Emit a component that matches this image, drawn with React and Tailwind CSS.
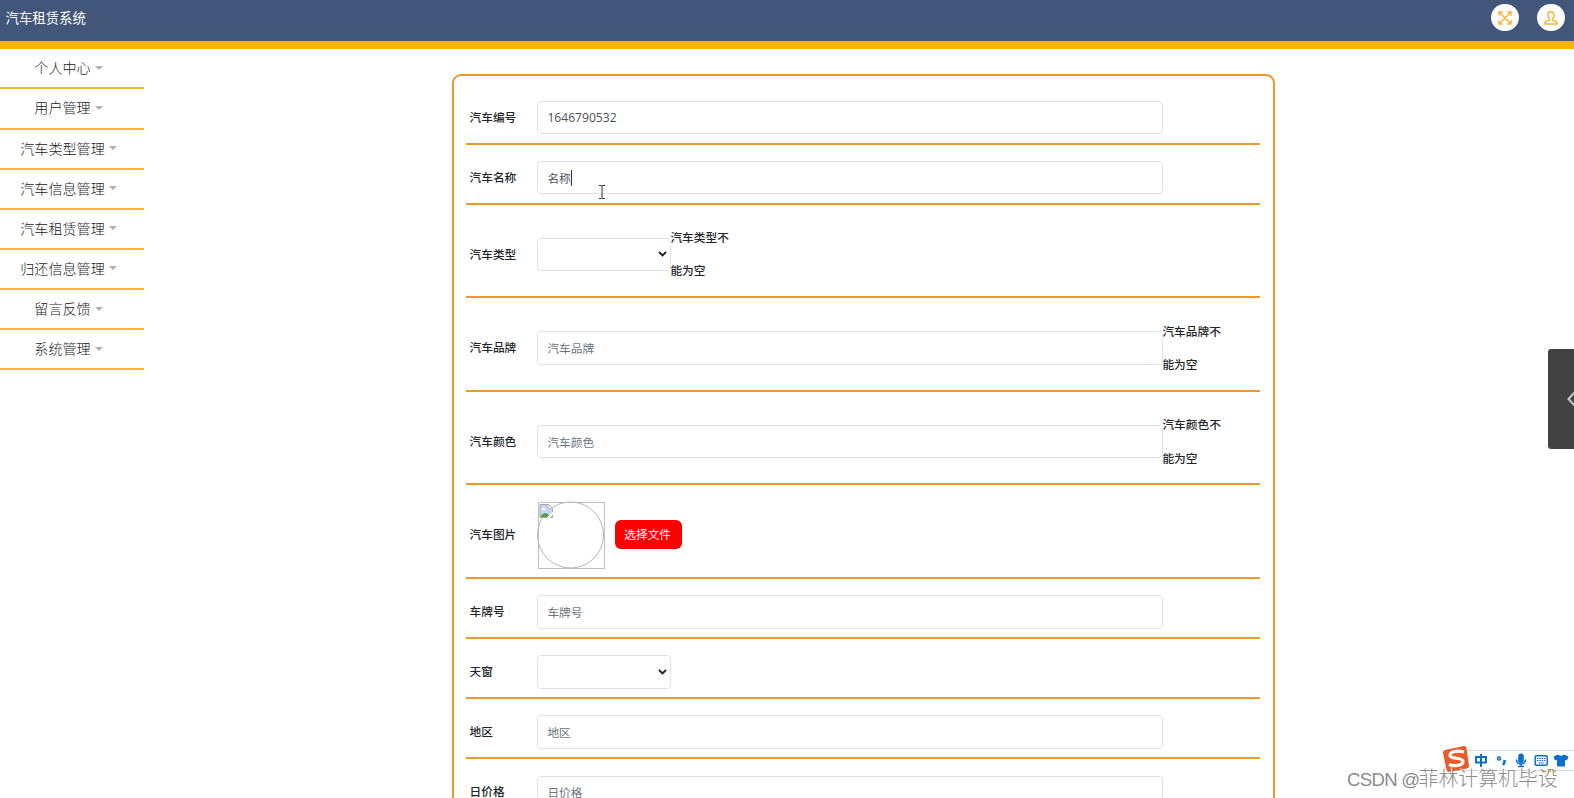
import { useState } from "react";

const menus = [
  "个人中心",
  "用户管理",
  "汽车类型管理",
  "汽车信息管理",
  "汽车租赁管理",
  "归还信息管理",
  "留言反馈",
  "系统管理",
];

const fields = [
  { name: "bianhao", label: "汽车编号", type: "text" },
  { name: "mingcheng", label: "汽车名称", type: "text", focused: true },
  { name: "leixing", label: "汽车类型", type: "select", error: true },
  { name: "pinpai", label: "汽车品牌", type: "text", error: true },
  { name: "yanse", label: "汽车颜色", type: "text", error: true },
  { name: "tupian", label: "汽车图片", type: "file" },
  { name: "chepaihao", label: "车牌号", type: "text" },
  { name: "tianchuang", label: "天窗", type: "select" },
  { name: "diqu", label: "地区", type: "text" },
  { name: "rijiage", label: "日价格", type: "text" },
];

function Header() {
  return (
    <header className="flex h-[49px] items-start justify-between border-b-8 border-[#ffb400] bg-[#415678] pl-[5.5px] pr-[9.5px]">
      <h1 className="pt-[8px] text-[13.4px] leading-[21px] text-white">汽车租赁系统</h1>
      <div className="flex gap-[18px] pt-[4px]">
        <button className="flex h-[27px] w-[28px] items-center justify-center rounded-full bg-white">
          <svg width="14" height="14" viewBox="0 0 14 14" fill="none" stroke="#fcb52e" strokeWidth="1.5">
            <path d="M1.5 1.5l11 11M12.5 1.5l-11 11M1 4.8V1h3.8M9.2 1H13v3.8M13 9.2V13H9.2M4.8 13H1V9.2" />
          </svg>
        </button>
        <button className="flex h-[27px] w-[28px] items-center justify-center rounded-full bg-white">
          <svg width="14" height="14" viewBox="0 0 14 14" fill="none" stroke="#fcb52e" strokeWidth="1.5" strokeLinejoin="round">
            <path d="M7 .8C4.9.8 4 2.2 4 4c0 1.9.6 2.9 1.5 3.8v1.4L1.8 10.6C1.2 11 .9 11.8.8 13h12.4c-.1-1.2-.4-2-1-2.4L8.5 9.2V7.8C9.4 6.9 10 5.9 10 4 10 2.2 9.1.8 7 .8z" />
          </svg>
        </button>
      </div>
    </header>
  );
}

function Sidebar() {
  return (
    <nav className="w-[144px] shrink-0 pt-[0.4px]">
      {menus.map((item) => (
        <a key={item} className="flex h-[40.1px] items-center justify-center border-b-2 border-[#f9b82f] pb-[1px] pr-[7px] text-[14.1px] font-light text-[#222]">
          {item}
          <span className="ml-[4px] h-0 w-0 border-x-4 border-t-4 border-x-transparent border-t-[#b0b0b0]"></span>
        </a>
      ))}
    </nav>
  );
}

function BrokenImage() {
  return (
    <svg width="68" height="68" viewBox="0 0 68 68" fill="none">
      <rect x="1.5" y="1.5" width="66" height="66" stroke="#c0c0c0" />
      <circle cx="33.5" cy="34" r="33" stroke="#b5b5b5" />
      <path d="M3 3.5h8l4.5 4v9H3z" fill="#c6d6f5" stroke="#a5a5a5" />
      <path d="M11 3.5v4h4.5z" fill="#fff" stroke="#a5a5a5" strokeWidth=".7" />
      <path d="M5 8.5c0-1.500 2-2 2.500-.8C9 7.500 9.500 8.500 9 9H5z" fill="#fff" />
      <path d="M3.5 16c1-3 3-4 5-4s3 1 3.500 4z" fill="#55a545" />
      <path d="M9 17.5l7-7v3l-4 4z" fill="#fff" />
    </svg>
  );
}

function Field({ field, value, onChange }) {
  const { name, label, type, error, focused } = field;

  return (
    <div className={`flex items-center border-b-2 border-[#eb982f] pl-[3.5px] pt-[16.5px] pb-[8.5px] ${error || type === "file" ? "h-[93.55px]" : "h-[60.1px]"}`}>
      <label className="w-[67.5px] shrink-0 font-medium text-[#212529]">{label}</label>

      {type === "text" && (
        <div className="relative h-[33.4px] w-[626px] shrink-0">
          <input name={name} value={value} onChange={onChange} placeholder={label} className={`h-full w-full rounded-[4px] border border-[#e0e2e6] bg-white px-[9.4px] text-[#495057] outline-none placeholder:text-[#6c757d] ${name === "bianhao" ? "font-['Open_Sans','Noto_Sans',sans-serif] text-[12.1px]" : ""}`} />
          {focused && <span className="absolute left-[34px] top-[9px] h-[16px] w-px bg-[#333]"></span>}
        </div>
      )}

      {type === "select" && (
        <div className="flex h-[33.4px] w-[134px] shrink-0 items-center justify-end rounded-[4px] border border-[#e0e2e6] pr-[3px]">
          <svg width="9" height="6" viewBox="0 0 9 6" fill="none" stroke="#222" strokeWidth="1.8">
            <path d="M1 1l3.5 3.5L8 1" />
          </svg>
        </div>
      )}

      {type === "file" && (
        <>
          <BrokenImage />
          <button className="mb-[1px] ml-[10.2px] h-[28.5px] w-[67px] rounded-[6px] bg-[#ff0000] pr-[2px] text-white">选择文件</button>
        </>
      )}

      {error && <span className="-ml-[0.6px] w-[66px] shrink-0 font-medium leading-[33.4px] text-[#212529]">{`${label}不能为空`}</span>}
    </div>
  );
}

function InputMethodBar() {
  return (
    <div className="absolute left-[1442px] top-[745px] flex h-[28px] w-[132px] items-center">
      <div className="absolute left-[14px] right-0 top-[5px] h-[21px] border-y border-[#c8dbe8] bg-white"></div>
      <svg className="relative" width="132" height="28" viewBox="0 0 132 28" fill="none">
        <path d="M3 5l19-4q2 0 2.500 2L27 21q0 2-2 2.500L7 27q-2 0-2.500-2L1 8q-.3-2 2-3z" fill="#ed5a29" />
        <path d="M22 7c-6-2-14-.5-14 3.500 0 4 13 1.500 13 6 0 4.500-9 5-14 3" stroke="#fff" strokeWidth="3.2" />
        <g stroke="#0b6fd0" strokeWidth="2">
          <path d="M34 12h10v5.500H34zM39 9v13" />
          <circle cx="57" cy="13.5" r="1.5" strokeWidth="1.5" />
          <path d="M62.500 15v2.500l-1.500 2.500" strokeWidth="2.5" />
          <path d="M74.500 14.500c0 6 9 6 9 0M79 18.500v3.500M76 21.500h6" strokeWidth="1.6" />
        </g>
        <rect x="76.2" y="8.5" width="5.6" height="9.5" rx="2.8" fill="#0b6fd0" />
        <rect x="93.2" y="10.7" width="12" height="9.5" rx="1" stroke="#0b6fd0" strokeWidth="1.5" />
        <path d="M95 13.500h9M95 15.500h9M97 17.800h5" stroke="#0b6fd0" strokeWidth="1.2" strokeDasharray="1.5 .8" />
        <path d="M116 9.500q3 2.500 6 0l4.500 2-1.500 4-2-.8v6.800h-8v-6.800l-2 .8-1.500-4z" fill="#0b6fd0" />
        {/* orange tip peeking out under the bar */}
        <path d="M100 26.500h4M106 26.500h3M111 26.500h3" stroke="#f5a13c" strokeWidth="1.5" />
      </svg>
    </div>
  );
}

export default function App() {
  const [form, setForm] = useState({ bianhao: "1646790532", mingcheng: "名称" });

  const handleChange = (e) => setForm({ ...form, [e.target.name]: e.target.value });

  return (
    <div className="relative h-[798px] w-[1574px] overflow-hidden bg-white font-['Noto_Sans','Noto_Sans_CJK_SC',sans-serif] text-[11.7px]">
      <Header />
      <div className="flex">
        <Sidebar />
        <main className="ml-[308px] mt-[25px] w-[823px] rounded-[9px] border-2 border-[#eb982f] pb-4 pl-[12px] pr-[13px] pt-[8.5px]">
          {fields.map((field) => (
            <Field key={field.name} field={field} value={form[field.name] || ""} onChange={handleChange} />
          ))}
        </main>
      </div>

      {/* collapsed side drawer */}
      <div className="absolute left-[1548px] top-[349px] flex h-[100px] w-[26px] items-center justify-end rounded-l-[3px] bg-[#424242]">
        <svg width="7" height="16" viewBox="0 0 7 16" fill="none" stroke="#c8c8c8" strokeWidth="2">
          <path d="M8 1L1.5 8L8 15" />
        </svg>
      </div>

      <InputMethodBar />

      <p className="absolute left-[1347px] top-[764px] flex items-baseline whitespace-nowrap font-['Liberation_Sans','Noto_Sans_CJK_SC',sans-serif] text-[19.9px] leading-[30px] text-[#8c8c8c] [text-shadow:-1px_-1px_0_#fff]">
        <span className="w-[71.5px] whitespace-pre text-[18.6px] tracking-[-0.7px]">CSDN @</span>
        <span className="font-light">菲林计算机毕设</span>
      </p>

      {/* text cursor */}
      <svg className="absolute left-[598px] top-[184px]" width="8" height="16" viewBox="0 0 8 16" fill="none" stroke="#333">
        <path d="M1 1.5h2.5l.5.5.5-.5H7M1 14.5h2.5l.5-.5.5.5H7M4 2v12" />
      </svg>
    </div>
  );
}
